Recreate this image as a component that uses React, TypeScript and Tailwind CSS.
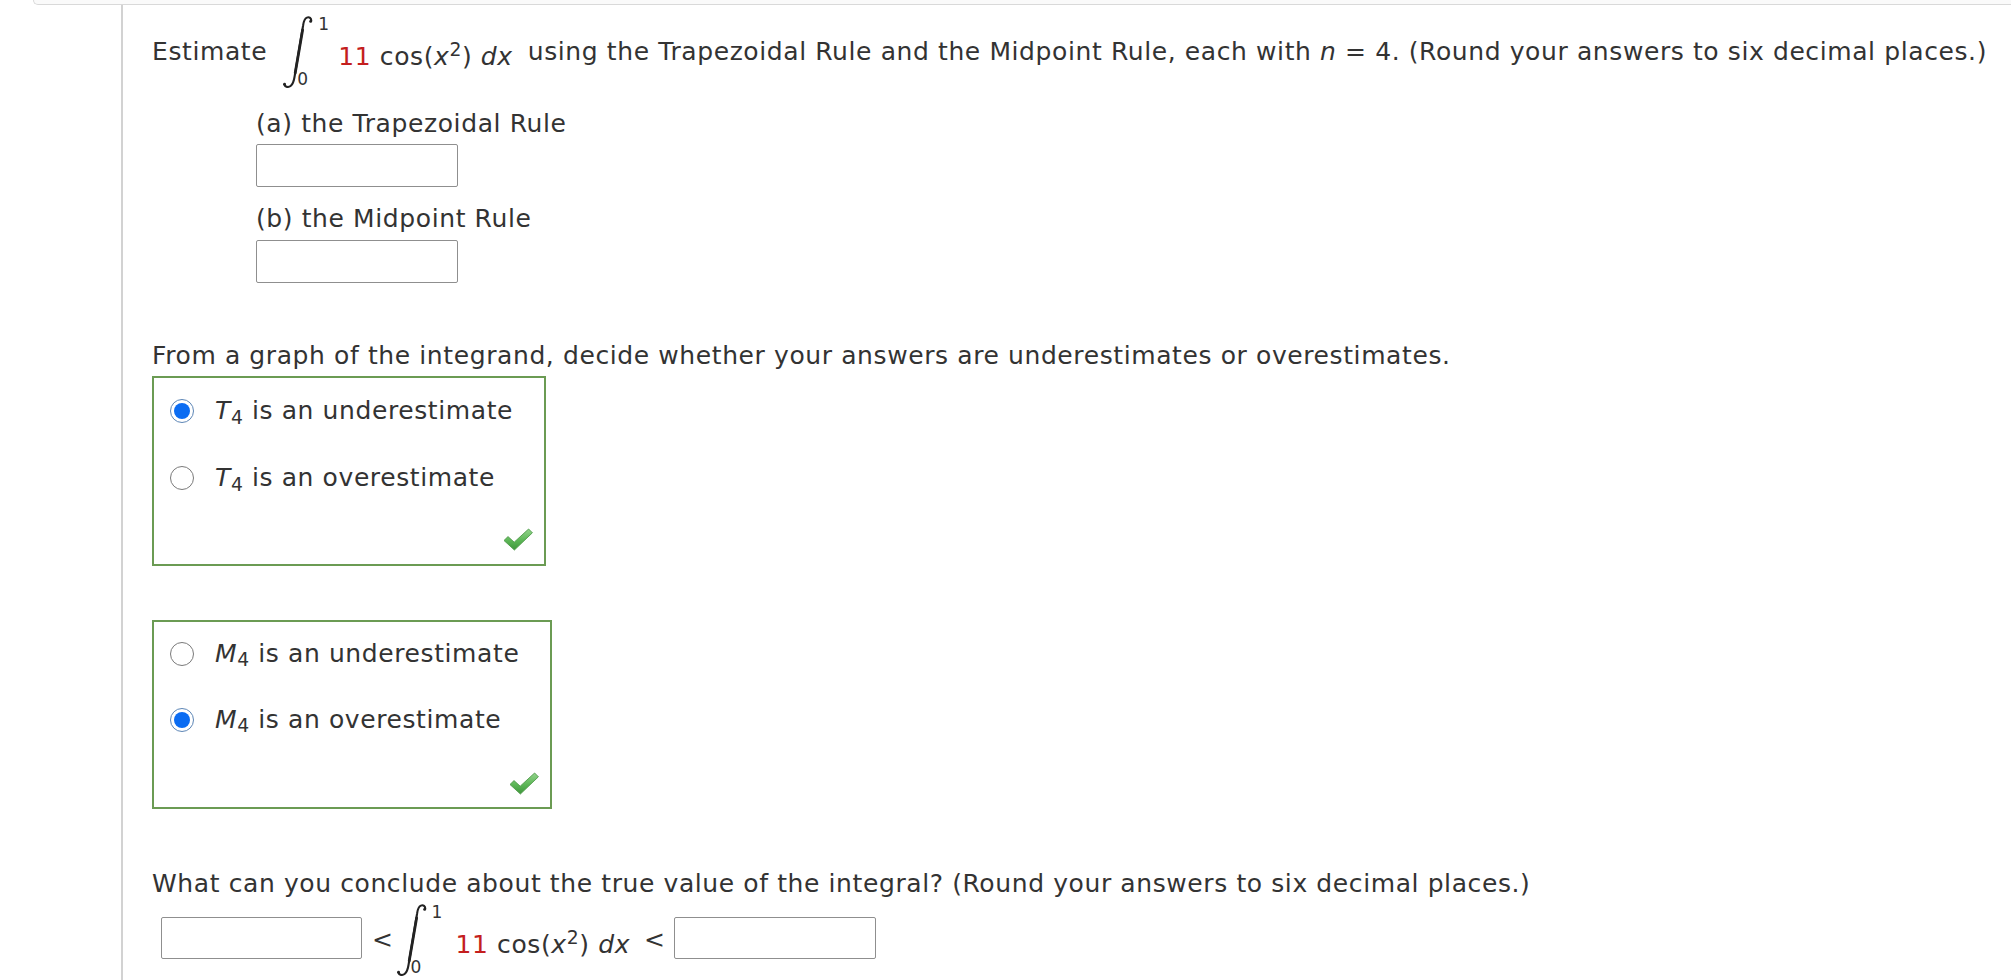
import React from "react";

function IntegralGlyph() {
  return (
    <svg
      width="32"
      height="72"
      viewBox="0 0 32 72"
      className="absolute left-0 top-[4px]"
    >
      <path
        d="M30.2 5.2 C30.6 2.2 28.2 0.6 25.9 1.6 C23.6 2.6 22.6 5.6 22.1 9.5 L13.6 60.5 C13 64.6 12 68.2 9.6 70 C7.4 71.6 4.2 71.2 3.3 68.6"
        fill="none"
        stroke="#222"
        strokeWidth="2.1"
        strokeLinecap="round"
      />
      <path d="M21.6 14 L14.2 57" stroke="#222" strokeWidth="2.8" strokeLinecap="round" />
      <circle cx="29.6" cy="5.4" r="1.4" fill="#222" />
      <circle cx="3.6" cy="68.2" r="1.4" fill="#222" />
    </svg>
  );
}

function Integral({ w }: { w: string }) {
  return (
    <span className={`relative inline-block h-[80px] shrink-0 ${w}`}>
      <IntegralGlyph />
      <span className="absolute left-[37px] top-[2px] text-[17px] leading-[20px]">1</span>
      <span className="absolute left-[16px] top-[57px] text-[17px] leading-[20px]">0</span>
    </span>
  );
}

function Integrand() {
  return (
    <span className="translate-y-[5px] whitespace-nowrap">
      <span className="text-[#c41e1e]">11</span> cos(<i>x</i>
      <sup>2</sup>) <i>dx</i>
    </span>
  );
}

function Radio({ selected }: { selected: boolean }) {
  if (selected) {
    return (
      <span className="flex h-[24px] w-[24px] shrink-0 items-center justify-center rounded-full border border-[#5d86b6] bg-white">
        <span className="h-[16px] w-[16px] rounded-full bg-[#0b6cf2]" />
      </span>
    );
  }
  return <span className="h-[24px] w-[24px] shrink-0 rounded-full border border-[#7a7a7a] bg-white" />;
}

function Check() {
  return (
    <svg width="30" height="23" viewBox="0 0 30 23">
      <defs>
        <linearGradient id="ck" x1="0" y1="0" x2="0" y2="1">
          <stop offset="0" stopColor="#93d48c" />
          <stop offset="0.55" stopColor="#5cb656" />
          <stop offset="1" stopColor="#3f963c" />
        </linearGradient>
      </defs>
      <path
        d="M1 12.5 L5 8.6 L11.2 14.2 L25.6 1 L29.4 4.8 L11.4 22 Z"
        fill="url(#ck)"
        stroke="#4f9a4a"
        strokeWidth="0.9"
        strokeLinejoin="round"
      />
    </svg>
  );
}

function Option({ selected, letter, text }: { selected: boolean; letter: string; text: string }) {
  return (
    <div className="flex h-[44px] items-center">
      <Radio selected={selected} />
      <span className="ml-[21px] whitespace-nowrap">
        <i>{letter}</i>
        <sub>4</sub> is an {text}
      </span>
    </div>
  );
}

function Box() {
  return <div className="h-[43px] w-[202px] rounded-[2px] border border-[#8f8f8f] bg-white" />;
}

export default function App() {
  return (
    <div className="h-[980px] w-[2011px] overflow-hidden bg-white font-['DejaVu_Sans',sans-serif] text-[25px] leading-[30px] tracking-[0.6px] text-[#333]">
      <div className="ml-[33px] h-[5px] rounded-bl-[5px] border-b border-l border-[#d9d9d9] bg-[#fafafa]" />
      <div className="flex h-[975px]">
        <div className="w-[121px] shrink-0" />
        <div className="w-[2px] shrink-0 bg-[#d2d2d2]" />
        <div className="flex flex-col items-start pl-[29px]">
          <div className="mt-[7px] flex h-[80px] items-center whitespace-nowrap">
            <span>Estimate</span>
            <span className="ml-[14px] flex">
              <Integral w="w-[57px]" />
            </span>
            <Integrand />
            <span className="ml-[15px]">
              using the Trapezoidal Rule and the Midpoint Rule, each with <i>n</i> = 4. (Round your answers to six
              decimal places.)
            </span>
          </div>

          <div className="ml-[104px] mt-[17px]">(a) the Trapezoidal Rule</div>
          <div className="ml-[104px] mt-[5px]">
            <Box />
          </div>
          <div className="ml-[104px] mt-[17px]">(b) the Midpoint Rule</div>
          <div className="ml-[104px] mt-[6px]">
            <Box />
          </div>

          <div className="mt-[58px] whitespace-nowrap">
            From a graph of the integrand, decide whether your answers are underestimates or overestimates.
          </div>

          <div className="mt-[5px] flex h-[190px] w-fit flex-col border-2 border-[#6b9b53] pl-[16px] pr-[31px] pt-[11px]">
            <Option selected={true} letter="T" text="underestimate" />
            <div className="mt-[23px]">
              <Option selected={false} letter="T" text="overestimate" />
            </div>
            <div className="mr-[-20px] mt-[28px] flex justify-end">
              <Check />
            </div>
          </div>

          <div className="mt-[54px] flex h-[190px] w-fit flex-col border-2 border-[#6b9b53] pl-[16px] pr-[31px] pt-[10px]">
            <Option selected={false} letter="M" text="underestimate" />
            <div className="mt-[22px]">
              <Option selected={true} letter="M" text="overestimate" />
            </div>
            <div className="mr-[-20px] mt-[30px] flex justify-end">
              <Check />
            </div>
          </div>

          <div className="mt-[60px] whitespace-nowrap">
            What can you conclude about the true value of the integral? (Round your answers to six decimal places.)
          </div>

          <div className="mt-[1px] flex h-[80px] items-center whitespace-nowrap">
            <div className="mb-[4px] ml-[9px]">
              <div className="h-[42px] w-[201px] rounded-[2px] border border-[#8f8f8f] bg-white" />
            </div>
            <span className="ml-[10px]">&lt;</span>
            <span className="ml-[1px] flex">
              <Integral w="w-[61px]" />
            </span>
            <Integrand />
            <span className="ml-[14px]">&lt;</span>
            <div className="mb-[4px] ml-[8px]">
              <div className="h-[42px] w-[202px] rounded-[2px] border border-[#8f8f8f] bg-white" />
            </div>
          </div>
        </div>
      </div>
    </div>
  );
}
